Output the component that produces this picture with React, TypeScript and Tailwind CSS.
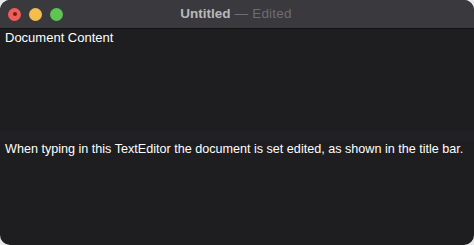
export default function App() {
  return (
    <div className="w-[474px] h-[245px] bg-[#e9e9eb]">
      <div className="w-full h-full rounded-[10px] overflow-hidden bg-[#1e1e20] flex flex-col font-['Liberation_Sans',Arial,sans-serif]">
        <div className="h-[29px] shrink-0 bg-[#3a393e] border-b border-[#121212] flex items-center relative">
          <div className="flex items-center gap-[8px] pl-[8px]">
            <div className="w-[13px] h-[13px] rounded-full bg-[#ec5f5a] flex items-center justify-center">
              <div className="w-[4px] h-[4px] rounded-full bg-[#7c1a16]" />
            </div>
            <div className="w-[13px] h-[13px] rounded-full bg-[#f5bd4f]" />
            <div className="w-[13px] h-[13px] rounded-full bg-[#5fc454]" />
          </div>
          <div className="absolute inset-0 flex items-center justify-center text-[13.5px] pr-[2px]">
            <span className="font-bold text-[#b9b8bd]">Untitled</span>
            <span className="text-[#6e6d72] ml-[4px] tracking-[0.2px]">— Edited</span>
          </div>
        </div>
        <div className="flex-1 flex flex-col">
          <div className="text-white text-[13px] leading-[16px] pl-[5px] pt-[1px]">Document Content</div>
          <div className="h-[85px]" />
          <div className="h-[10px] bg-[#212025]" />
          <div className="text-white text-[12.6px] leading-[16px] pl-[5px] whitespace-nowrap">
            When typing in this TextEditor the document is set edited, as shown in the title bar.
          </div>
        </div>
      </div>
    </div>
  );
}
